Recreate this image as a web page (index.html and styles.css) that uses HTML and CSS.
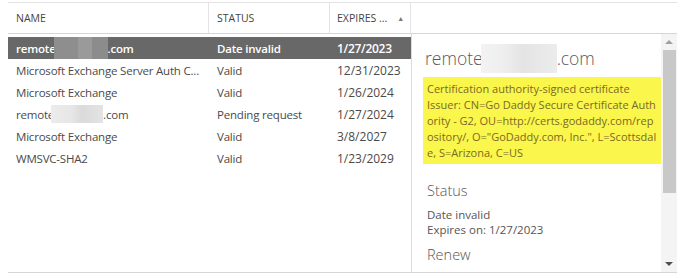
FILE: index.html
```html
<!DOCTYPE html>
<html>
<head>
<meta charset="utf-8">
<link rel="stylesheet" href="styles.css">
</head>
<body>
<div class="panel">
  <div class="head">
    <div class="hcell c-name">NAME</div>
    <div class="hcell c-status">STATUS</div>
    <div class="hcell c-exp">EXPIRES ...<span class="sort">&#9650;</span></div>
    <div class="hcell c-rest"></div>
  </div>
  <div class="body">
    <div class="list">
      <div class="row sel">
        <div class="c-name">remote<span class="blur b-sel"></span>.com</div>
        <div class="c-status">Date invalid</div>
        <div class="c-exp">1/27/2023</div>
      </div>
      <div class="row">
        <div class="c-name">Microsoft Exchange Server Auth C...</div>
        <div class="c-status">Valid</div>
        <div class="c-exp">12/31/2023</div>
      </div>
      <div class="row">
        <div class="c-name">Microsoft Exchange</div>
        <div class="c-status">Valid</div>
        <div class="c-exp">1/26/2024</div>
      </div>
      <div class="row">
        <div class="c-name">remote<span class="blur b-row"></span>.com</div>
        <div class="c-status">Pending request</div>
        <div class="c-exp">1/27/2024</div>
      </div>
      <div class="row">
        <div class="c-name">Microsoft Exchange</div>
        <div class="c-status">Valid</div>
        <div class="c-exp">3/8/2027</div>
      </div>
      <div class="row">
        <div class="c-name">WMSVC-SHA2</div>
        <div class="c-status">Valid</div>
        <div class="c-exp">1/23/2029</div>
      </div>
    </div>
    <div class="detail">
      <div class="content">
        <div class="title">remote<span class="blur b-title"></span>.com</div>
        <div class="note">Certification authority-signed certificate<br>Issuer: CN=Go Daddy Secure Certificate Auth<br>ority - G2, OU=http://certs.godaddy.com/rep<br>ository/, O="GoDaddy.com, Inc.", L=Scottsdal<br>e, S=Arizona, C=US</div>
        <div class="sec-h">Status</div>
        <div class="sec-t">Date invalid<br>Expires on: 1/27/2023</div>
        <div class="sec-h renew">Renew</div>
      </div>
      <div class="scroll">
        <div class="sbtn"><span class="arr up"></span></div>
        <div class="track"><div class="thumb"></div></div>
        <div class="sbtn"><span class="arr down"></span></div>
      </div>
    </div>
  </div>
</div>
</body>
</html>
```
FILE: styles.css
```css
html, body {
  margin: 0;
  padding: 0;
  background: #fff;
}
body {
  font-family: "Open Sans", "Noto Sans", sans-serif;
  color: #444;
}
.panel {
  margin: 2px 6px 0 8px;
  width: 669px;
  border-top: 1px solid #e3e3e3;
  border-bottom: 1px solid #d6d6d6;
}
.head {
  display: flex;
  height: 30px;
  border-bottom: 1px solid #d6d6d6;
}
.hcell {
  display: flex;
  align-items: center;
  font-size: 10.5px;
  color: #444;
  box-sizing: border-box;
  border-right: 1px solid #e3e3e3;
}
.c-name { width: 201px; padding-left: 8px; box-sizing: border-box; }
.c-status { width: 121px; padding-left: 8px; box-sizing: border-box; }
.c-exp { width: 81px; padding-left: 7px; box-sizing: border-box; }
.hcell.c-rest { flex: 1; border-right: none; }
.sort {
  font-size: 7px;
  color: #777;
  margin-left: 10px;
}
.body {
  display: flex;
  height: 238px;
}
.list {
  width: 403px;
  padding-top: 3px;
}
.row {
  display: flex;
  height: 22px;
  align-items: center;
  font-size: 12px;
  color: #4a4a4a;
  white-space: nowrap;
}
.row > div { overflow: hidden; display: flex; align-items: center; height: 22px; }
.row > .c-name, .row > .c-status {
  font-size: 11.5px;
  letter-spacing: -0.2px;
}
.row.sel {
  background: #686868;
  color: #fff;
  font-weight: 600;
}
.row.sel > .c-exp { letter-spacing: -0.3px; }
.blur {
  display: inline-block;
  flex: none;
}
.b-sel {
  width: 54px;
  height: 22px;
  margin-left: -2px;
  background: linear-gradient(90deg, #8e8e8e 0, #8e8e8e 45%, #9a9a9a 45%, #9a9a9a 70%, #8c8c8c 70%);
}
.b-row {
  width: 52px;
  height: 18px;
  margin-left: -3px;
  background: linear-gradient(90deg, #ececec 0, #e6e6e6 40%, #dadada 60%, #e4e4e4 100%);
}
.detail {
  flex: 1;
  display: flex;
  border-left: 1px solid #dcdcdc;
}
.content {
  flex: 1;
  padding: 10px 0 0 11px;
}
.title {
  display: flex;
  align-items: center;
  height: 28px;
  padding-left: 2px;
  font-size: 17.5px;
  font-weight: 300;
  color: #5a5a5a;
}
.b-title {
  width: 76px;
  height: 29px;
  margin-left: -2px;
  background: linear-gradient(90deg, #f3f3f3 0, #eeeeee 30%, #e4e4e4 55%, #ececec 100%);
}
.note {
  margin-top: 5px;
  background: #faf64c;
  color: #7a6a22;
  font-size: 11px;
  line-height: 16px;
  padding: 4px 4px 3px;
  white-space: nowrap;
  overflow: hidden;
}
.sec-h {
  margin-top: 17px;
  padding-left: 4px;
  font-size: 14.5px;
  font-weight: 300;
  line-height: 20px;
  color: #555;
}
.sec-t {
  margin-top: 6px;
  padding-left: 4px;
  font-size: 11.5px;
  line-height: 15px;
  color: #555;
}
.sec-h.renew { margin-top: 8px; }
.scroll {
  width: 16px;
  display: flex;
  flex-direction: column;
  background: #f4f4f4;
}
.sbtn {
  height: 16px;
  display: flex;
  align-items: center;
  justify-content: center;
}
.arr {
  width: 0;
  height: 0;
  border-left: 4px solid transparent;
  border-right: 4px solid transparent;
}
.arr.up { border-bottom: 4px solid #a0a0a0; }
.arr.down { border-top: 4px solid #505050; }
.track { flex: 1; }
.thumb {
  margin: 0 1px 0 2px;
  height: 143px;
  background: #c8c8c8;
}
```
